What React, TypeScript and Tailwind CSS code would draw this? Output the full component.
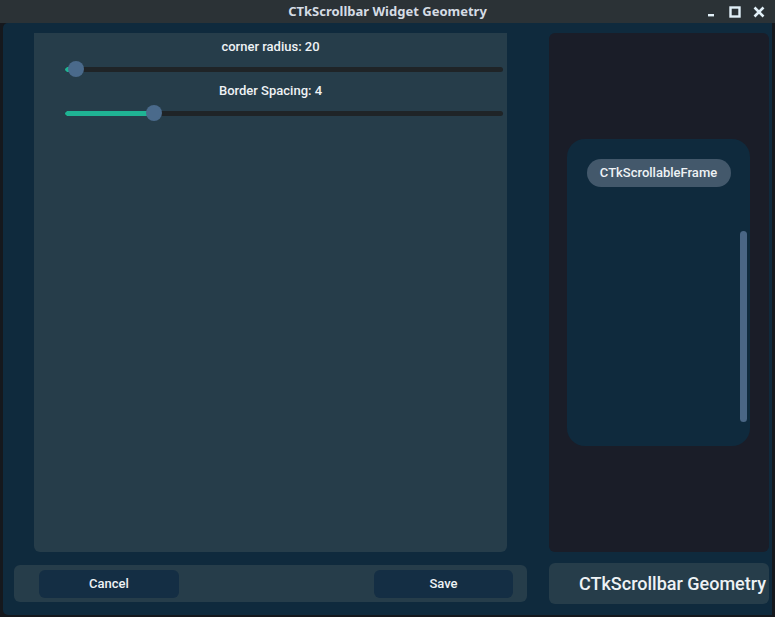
import React from "react";

function Slider({ value }: { value: number }) {
	// value = thumb centre offset from the track start, in px
	return (
		<div className="relative ml-[31px] flex h-4 w-[438px] items-center">
			<div className="relative h-[5px] w-full overflow-hidden rounded-full bg-[#1f2427]">
				<div className="h-full rounded-full bg-[#1fb394]" style={{ width: value }} />
			</div>
			<div
				className="absolute top-0 h-4 w-4 rounded-full bg-[#4a6a8b]"
				style={{ left: value - 8 }}
			/>
		</div>
	);
}

function WindowControls() {
	return (
		<div className="absolute right-[10px] top-0 flex h-[23px] items-center gap-[12px] text-[#e2f0f8]">
			<svg width="10" height="10" viewBox="0 0 10 10">
				<rect x="1" y="7" width="6" height="2.4" fill="currentColor" />
			</svg>
			<svg width="12" height="12" viewBox="0 0 12 12">
				<rect x="1.5" y="1.5" width="9" height="9" fill="none" stroke="currentColor" strokeWidth="2.4" />
			</svg>
			<svg width="12" height="12" viewBox="0 0 12 12">
				<path d="M1.5 1.5 L10.5 10.5 M10.5 1.5 L1.5 10.5" stroke="currentColor" strokeWidth="2.6" />
			</svg>
		</div>
	);
}

export default function App() {
	return (
		<div className="relative h-[617px] w-[775px] overflow-hidden bg-[#15181d] font-['Roboto',sans-serif] text-[#eef2f5]">
			{/* title bar */}
			<div className="relative flex h-[23px] items-center justify-center bg-[#2b3236]">
				<span className="font-['Noto_Sans',sans-serif] text-[13px] font-bold text-[#d5dce4]">
					CTkScrollbar Widget Geometry
				</span>
				<WindowControls />
			</div>

			{/* window body */}
			<div className="ml-[3px] flex h-[592px] w-[769px] rounded-l-[5px] bg-[#0f2a3d] pt-[10px]">
				{/* left column */}
				<div className="ml-[11px] flex w-[513px] flex-col">
					<div className="mx-[20px] flex h-[519px] flex-col rounded-b-[6px] bg-[#263d4a]">
						<div className="mt-[5px] h-[17px] text-center text-[13px] font-medium leading-[17px]">
							corner radius: 20
						</div>
						<div className="mt-[6px]">
							<Slider value={11} />
						</div>
						<div className="mt-[5px] h-[17px] text-center text-[13px] font-medium leading-[17px]">
							Border Spacing: 4
						</div>
						<div className="mt-[6px]">
							<Slider value={89} />
						</div>
					</div>

					<div className="mt-[13px] flex h-[37px] items-center justify-between rounded-[6px] bg-[#263d4a] pl-[25px] pr-[14px]">
						<button className="h-[28px] w-[140px] rounded-[6px] bg-[#142e44] text-[13px] font-medium">
							Cancel
						</button>
						<button className="h-[28px] w-[139px] rounded-[6px] bg-[#142e44] text-[13px] font-medium">
							Save
						</button>
					</div>
				</div>

				{/* right column */}
				<div className="ml-[22px] flex w-[220px] flex-col">
					<div className="h-[519px] rounded-[6px] bg-[#1a1d28] pl-[18px] pt-[106px]">
						<div className="relative flex h-[307px] w-[183px] flex-col items-center rounded-[18px] bg-[#0f2a3d] pt-[20px]">
							<div className="flex h-[28px] w-[144px] items-center justify-center rounded-full bg-[#43586b] text-[13px] font-medium">
								CTkScrollableFrame
							</div>
							<div className="absolute right-[3px] top-[92px] h-[191px] w-[7px] rounded-full bg-[#4a6685]" />
						</div>
					</div>

					<div className="mt-[11px] flex h-[41px] items-center overflow-hidden whitespace-nowrap rounded-[6px] bg-[#263d4a] pl-[30px] text-[18px] font-medium">
						CTkScrollbar Geometry
					</div>
				</div>
			</div>
		</div>
	);
}
